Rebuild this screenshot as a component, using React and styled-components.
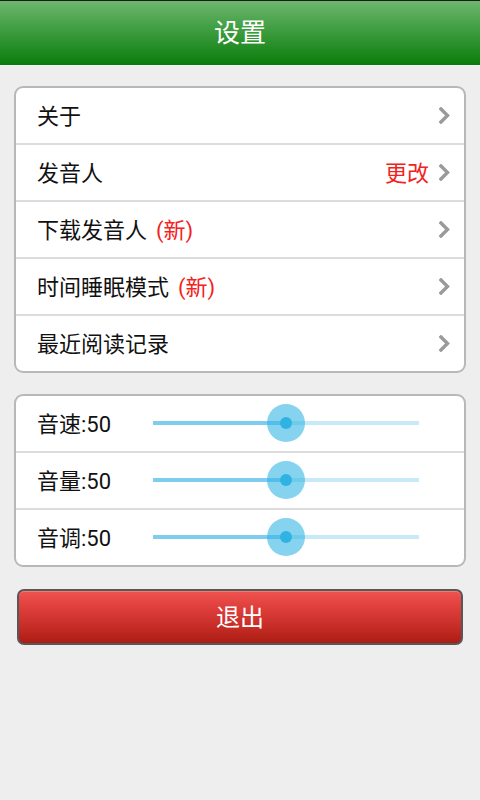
import React from "react";
import styled, { createGlobalStyle } from "styled-components";

const Global = createGlobalStyle`
  html, body { margin: 0; padding: 0; background: #eeeeee; }
  body { font-family: Roboto, "Noto Sans CJK SC", sans-serif; }
  * { box-sizing: border-box; }
`;

const Page = styled.div`
  width: 480px;
  min-height: 800px;
  background: #eeeeee;
`;

const Header = styled.header`
  height: 66px;
  border-top: 1px solid #1a1a1a;
  border-bottom: 1px solid #f4f4f4;
  background: linear-gradient(to bottom, #6db66f 0%, #43a045 40%, #0a7c0b 100%);
  display: flex;
  align-items: center;
  justify-content: center;
  color: #ffffff;
  font-size: 26px;
  padding-bottom: 6px;
`;

const Content = styled.main`
  padding: 20px 14px 0 14px;
  display: flex;
  flex-direction: column;
  gap: 21px;
`;

const Card = styled.section`
  background: #ffffff;
  border: 2px solid #b8b8b8;
  border-radius: 9px;
  overflow: hidden;
`;

const Row = styled.div`
  height: ${(p) => (p.$first ? 55 : 57)}px;
  border-top: ${(p) => (p.$first ? "none" : "2px solid #dcdcdc")};
  display: flex;
  align-items: center;
  padding: 0 14px 3px 21px;
  font-size: 22px;
  color: #111111;
`;

const Label = styled.span`
  flex: 1;
  white-space: nowrap;
`;

const New = styled.span`
  color: #f42121;
  margin-left: 9px;
`;

const Action = styled.span`
  color: #f42121;
  margin-right: 10px;
`;

const ChevronBox = styled.svg`
  margin-top: 3px;
`;

const Chevron = () => (
  <ChevronBox width="11" height="17" viewBox="0 0 11 17">
    <path d="M2 2 L8.5 8.5 L2 15" fill="none" stroke="#9a9a9a" strokeWidth="3.4" strokeLinecap="square" />
  </ChevronBox>
);

const SliderLabel = styled.span`
  width: 116px;
  white-space: nowrap;
`;

const Track = styled.div`
  position: relative;
  width: 266px;
  height: 4px;
  margin-top: 2px;
  background: #c6eaf8;
`;

const Fill = styled.div`
  height: 100%;
  background: #7fcdee;
`;

const Thumb = styled.div`
  position: absolute;
  top: 50%;
  width: 38px;
  height: 38px;
  margin-left: -19px;
  margin-top: -19px;
  border-radius: 50%;
  background: rgba(51, 181, 229, 0.6);
  display: flex;
  align-items: center;
  justify-content: center;
  &::after {
    content: "";
    width: 12px;
    height: 12px;
    border-radius: 50%;
    background: #2fb2e4;
  }
`;

const Slider = ({ value }) => (
  <Track>
    <Fill style={{ width: `${value}%` }} />
    <Thumb style={{ left: `${value}%` }} />
  </Track>
);

const ExitButton = styled.button`
  margin: 1px 3px 0 3px;
  height: 56px;
  border: 2px solid #575757;
  border-radius: 7px;
  background: linear-gradient(to bottom, #ef5350 0%, #e0403d 30%, #c52c26 70%, #ac1d14 100%);
  box-shadow: inset 0 1px 0 #f47a77;
  color: #ffffff;
  font-family: Roboto, "Noto Sans CJK SC", sans-serif;
  font-size: 24px;
  display: flex;
  align-items: center;
  justify-content: center;
  padding: 0 0 4px 0;
`;

const menu = [
  { label: "关于" },
  { label: "发音人", action: "更改" },
  { label: "下载发音人", isNew: true },
  { label: "时间睡眠模式", isNew: true },
  { label: "最近阅读记录" },
];

const sliders = [
  { label: "音速", value: 50 },
  { label: "音量", value: 50 },
  { label: "音调", value: 50 },
];

export default function App() {
  return (
    <Page>
      <Global />
      <Header>设置</Header>
      <Content>
        <Card>
          {menu.map((m, i) => (
            <Row key={m.label} $first={i === 0}>
              <Label>
                {m.label}
                {m.isNew && <New>(新)</New>}
              </Label>
              {m.action && <Action>{m.action}</Action>}
              <Chevron />
            </Row>
          ))}
        </Card>
        <Card>
          {sliders.map((s, i) => (
            <Row key={s.label} $first={i === 0}>
              <SliderLabel>
                {s.label}:{s.value}
              </SliderLabel>
              <Slider value={s.value} />
            </Row>
          ))}
        </Card>
        <ExitButton>退出</ExitButton>
      </Content>
    </Page>
  );
}
